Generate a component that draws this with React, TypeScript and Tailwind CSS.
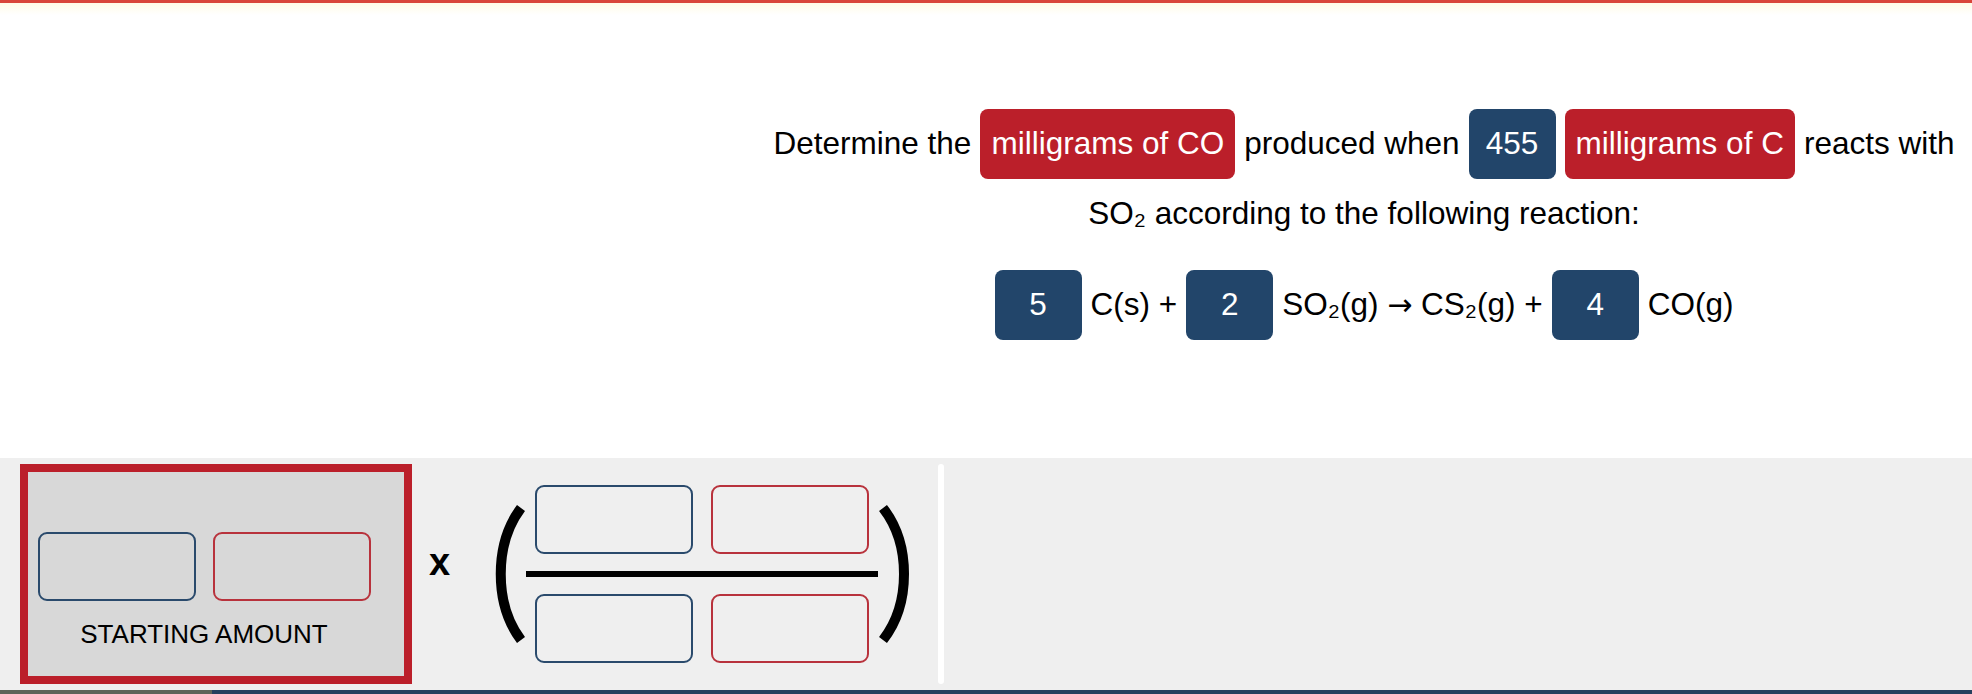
import React from "react";

const Pill = ({ children }: { children: React.ReactNode }) => (
  <span className="inline-flex items-center h-[70px] px-[11px] rounded-[8px] bg-[#bb1f2a] text-white">
    {children}
  </span>
);

const NumBox = ({ value }: { value: string }) => (
  <span className="inline-flex items-center justify-center h-[70px] w-[87px] rounded-[8px] bg-[#22456a] text-white">
    {value}
  </span>
);

const UnitBox = ({ tone }: { tone: "blue" | "red" }) => (
  <div
    className={
      tone === "blue"
        ? "w-[158px] h-[69px] rounded-[9px] border-2 border-[#2a4a6c]"
        : "w-[158px] h-[69px] rounded-[9px] border-2 border-[#b8323c]"
    }
  />
);

const Paren = ({ side }: { side: "left" | "right" }) => (
  <svg width="34" height="140" viewBox="0 0 34 140" className="shrink-0">
    <path
      d={side === "left" ? "M29 4 C 2 40, 2 100, 29 136" : "M5 4 C 33 40, 33 100, 5 136"}
      fill="none"
      stroke="#000"
      strokeWidth="10"
    />
  </svg>
);

export default function App() {
  return (
    <div className="w-full h-[694px] flex flex-col bg-white font-['Liberation_Sans',Arial,sans-serif] text-black overflow-hidden">
      <div className="h-[3px] bg-[#d9453a]" />
      <div className="h-[12px] bg-gradient-to-b from-[#fffbe6] to-white" />

      {/* question */}
      <div className="flex h-[443px]">
        <div className="w-[756px] shrink-0" />
        <div className="flex-1 flex flex-col items-center pt-[94px] text-[31.5px] leading-none">
          <div className="flex items-center gap-[9px] whitespace-nowrap">
            <span>Determine the</span>
            <Pill>milligrams of CO</Pill>
            <span>produced when</span>
            <NumBox value="455" />
            <Pill>milligrams of C</Pill>
            <span>reacts with</span>
          </div>
          <div className="mt-[17px] h-[36px] flex items-center">SO₂ according to the following reaction:</div>
          <div className="mt-[38px] flex items-center gap-[9px] whitespace-nowrap">
            <NumBox value="5" />
            <span>C(s) +</span>
            <NumBox value="2" />
            <span>
              SO₂(g) <span className="font-['DejaVu_Sans',sans-serif] text-[30px]">→</span> CS₂(g) +
            </span>
            <NumBox value="4" />
            <span>CO(g)</span>
          </div>
        </div>
      </div>

      {/* work area */}
      <div className="h-[232px] bg-[#efefef] flex items-center pl-[20px] py-[6px]">
        <div className="w-[392px] h-[220px] border-[8px] border-[#bb1f2a] bg-[#d8d8d8] pl-[9px] pt-[60px]">
          <div className="w-[334px] flex flex-col items-center">
            <div className="flex gap-[17px]">
              <UnitBox tone="blue" />
              <UnitBox tone="red" />
            </div>
            <div className="mt-[18px] text-[26px] leading-[30px]">STARTING AMOUNT</div>
          </div>
        </div>

        <span className="ml-[17px] text-[38px] font-bold leading-none -mt-[24px]">x</span>

        <div className="ml-[42px] flex items-center">
          <Paren side="left" />
          <div className="w-[352px] flex flex-col items-center">
            <div className="flex gap-[18px]">
              <UnitBox tone="blue" />
              <UnitBox tone="red" />
            </div>
            <div className="w-full h-[6px] bg-black my-[17px]" />
            <div className="flex gap-[18px]">
              <UnitBox tone="blue" />
              <UnitBox tone="red" />
            </div>
          </div>
          <Paren side="right" />
        </div>

        <div className="ml-[26px] w-[6px] self-stretch rounded-full bg-white" />
      </div>

      <div className="h-[4px] flex">
        <div className="w-[212px] bg-[#5c6458]" />
        <div className="flex-1 bg-[#24405e]" />
      </div>
    </div>
  );
}
